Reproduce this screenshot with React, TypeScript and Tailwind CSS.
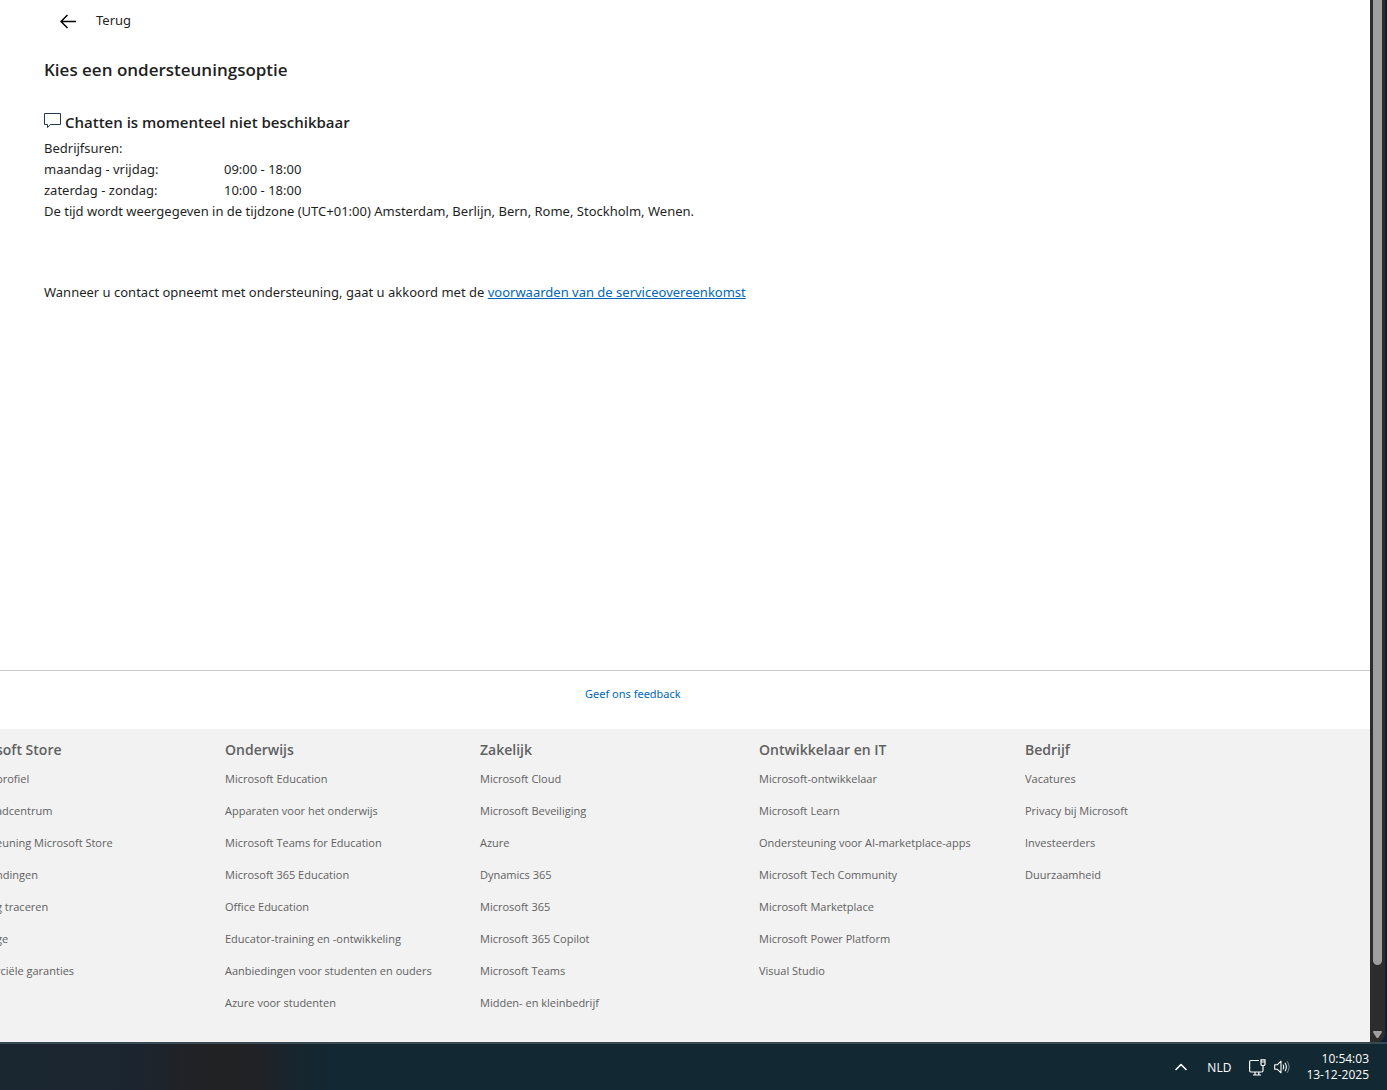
import type { ReactNode } from "react";

type FooterColumn = { title: string; links: string[] };

const FOOTER: FooterColumn[] = [
  { title: "soft Store", links: ["profiel", "adcentrum", "euning Microsoft Store", "ndingen", "g traceren", "ge", "rciële garanties"] },
  {
    title: "Onderwijs",
    links: [
      "Microsoft Education",
      "Apparaten voor het onderwijs",
      "Microsoft Teams for Education",
      "Microsoft 365 Education",
      "Office Education",
      "Educator-training en -ontwikkeling",
      "Aanbiedingen voor studenten en ouders",
      "Azure voor studenten",
    ],
  },
  {
    title: "Zakelijk",
    links: ["Microsoft Cloud", "Microsoft Beveiliging", "Azure", "Dynamics 365", "Microsoft 365", "Microsoft 365 Copilot", "Microsoft Teams", "Midden- en kleinbedrijf"],
  },
  {
    title: "Ontwikkelaar en IT",
    links: ["Microsoft-ontwikkelaar", "Microsoft Learn", "Ondersteuning voor AI-marketplace-apps", "Microsoft Tech Community", "Microsoft Marketplace", "Microsoft Power Platform", "Visual Studio"],
  },
  { title: "Bedrijf", links: ["Vacatures", "Privacy bij Microsoft", "Investeerders", "Duurzaamheid"] },
];

const HOURS = [
  { days: "maandag - vrijdag:", time: "09:00 - 18:00" },
  { days: "zaterdag - zondag:", time: "10:00 - 18:00" },
];

export default function App() {
  return (
    <div className="flex min-h-screen flex-col bg-[#122832] font-['Open_Sans','Noto_Sans',sans-serif]">
      <div className="flex flex-1">
        <div className="flex min-w-0 flex-1 flex-col bg-white">
          <SupportOptions />
          <div className="border-t border-[#cccccc] pt-3 pb-6 pl-[585px]">
            <a href="#feedback" className="block font-['Noto_Sans',sans-serif] text-[11px] leading-[22px] text-[#0067b8]">Geef ons feedback</a>
          </div>
          <SiteFooter />
        </div>
        <Scrollbar />
      </div>
      <Taskbar />
    </div>
  );
}

function SupportOptions() {
  return (
    <main className="flex-1 px-11 font-['Noto_Sans',sans-serif] text-[13px] leading-[21px] text-[#1f1f1f]">
      <button className="flex items-center gap-5 px-4 pt-[10px] text-left">
        <BackArrow />
        <span>Terug</span>
      </button>
      <h1 className="mt-[27px] font-['Open_Sans',sans-serif] text-[17px] leading-6 font-semibold">Kies een ondersteuningsoptie</h1>

      <section className="mt-7">
        <h2 className="flex items-center gap-1 font-['Open_Sans',sans-serif] text-[15px] leading-6 font-semibold">
          <ChatIcon />
          Chatten is momenteel niet beschikbaar
        </h2>
        <p className="mt-1">Bedrijfsuren:</p>
        <table>
          <tbody>
            {HOURS.map(h => (
              <tr key={h.days}>
                <th scope="row" className="w-[180px] p-0 text-left font-normal">{h.days}</th>
                <td className="p-0">{h.time}</td>
              </tr>
            ))}
          </tbody>
        </table>
        <p>De tijd wordt weergegeven in de tijdzone (UTC+01:00) Amsterdam, Berlijn, Bern, Rome, Stockholm, Wenen.</p>
      </section>

      <p className="mt-[60px]">
        Wanneer u contact opneemt met ondersteuning, gaat u akkoord met de{" "}
        <a href="#voorwaarden" className="text-[#0067b8] underline">voorwaarden van de serviceovereenkomst</a>
      </p>
    </main>
  );
}

function SiteFooter() {
  return (
    <footer className="grid grid-cols-[225fr_255fr_279fr_266fr_345fr] overflow-hidden bg-[#f2f2f2] pt-[9px] pb-[23px] text-[#616161]">
      {FOOTER.map(col => (
        <nav key={col.title} aria-label={col.title} className="whitespace-nowrap first:-ml-1">
          <h2 className="text-[14px] leading-6 font-semibold">{col.title}</h2>
          <ul className="mt-px">
            {col.links.map(l => (
              <li key={l} className="h-8 text-[11px] leading-8"><a href="#">{l}</a></li>
            ))}
          </ul>
        </nav>
      ))}
    </footer>
  );
}

function Scrollbar() {
  return (
    <div className="flex bg-[#0a2136]">
      <div className="flex w-[15px] flex-col items-center rounded-br-lg bg-[#2c2c2c]">
        <div className="w-[9px] flex-1 rounded-b-full bg-[#9f9f9f]" />
        <svg width="9" height="77" viewBox="0 0 9 77" fill="#9f9f9f" aria-hidden="true">
          <path d="M1 66h7c1 0 1.300.8.8 1.500l-3.200 5c-.5.8-1.700.8-2.200 0l-3.200-5C-.3 66.800 0 66 1 66z" />
        </svg>
      </div>
      <div className="w-[2px]" />
    </div>
  );
}

function TrayButton({ label, children }: { label: string; children: ReactNode }) {
  return <button aria-label={label} className="flex items-center">{children}</button>;
}

function Taskbar() {
  return (
    <div className="flex h-12 items-center justify-end border-t-2 border-[#3a4852] bg-[linear-gradient(to_right,#1b2730_0,#1b2530_130px,#212224_200px,#212224_250px,#1b242c_280px,#122832_330px,#122832_100%)] pr-[18px] text-[12px] text-white">
      <TrayButton label="Verborgen pictogrammen weergeven">
        <svg width="12" height="8" viewBox="0 0 12 8" fill="none" stroke="currentColor" strokeWidth="1.600" strokeLinecap="round" strokeLinejoin="round">
          <path d="M1 6.500l5-5 5 5" />
        </svg>
      </TrayButton>
      <button className="ml-5 pt-px">NLD</button>
      <div className="ml-[18px] flex items-center gap-2">
        <TrayButton label="Netwerk"><NetworkIcon /></TrayButton>
        <TrayButton label="Volume"><VolumeIcon /></TrayButton>
      </div>
      <div className="ml-4 text-right leading-4">
        <div>10:54:03</div>
        <div>13-12-2025</div>
      </div>
    </div>
  );
}

function BackArrow() {
  return (
    <svg width="16" height="16" viewBox="0 0 16 16" fill="none" stroke="#000" strokeWidth="1.500" aria-hidden="true">
      <path d="M16 8.500H1M7.500 2L1 8.500 7.500 15" />
    </svg>
  );
}

function ChatIcon() {
  return (
    <svg className="mb-1" width="17" height="15" viewBox="0 0 17 15" fill="none" stroke="#1f3a52" aria-hidden="true">
      <path d="M.5.5h16v11H6.500l-3 3v-3h-3z" />
    </svg>
  );
}

function NetworkIcon() {
  return (
    <svg width="17" height="17" viewBox="0 0 17 17" fill="none" stroke="currentColor" strokeWidth="1.200" aria-hidden="true">
      <path d="M10 1.500H2Q.6 1.500.6 3v8.500Q.6 13 2 13H12.500Q14 13 14 11.500V7" />
      <path d="M4 16h8M6 13v3M9.800 13v3M12 .8h4v4.400q0 1.300-1.300 1.300h-1.400Q12 6.500 12 5.200zM12 3h4" />
    </svg>
  );
}

function VolumeIcon() {
  return (
    <svg width="16" height="14" viewBox="0 0 16 14" fill="none" stroke="currentColor" strokeWidth="1.100" strokeLinecap="round" strokeLinejoin="round" aria-hidden="true">
      <path d="M.7 4.800h2.500L7 1.200v11.600L3.200 9.200H.7z" />
      <path d="M9.200 5q1.200 2 0 4M11.200 3.200q2.400 3.800 0 7.600" />
      <path d="M13.300 1.500q3.600 5.500 0 11" opacity=".4" />
    </svg>
  );
}
